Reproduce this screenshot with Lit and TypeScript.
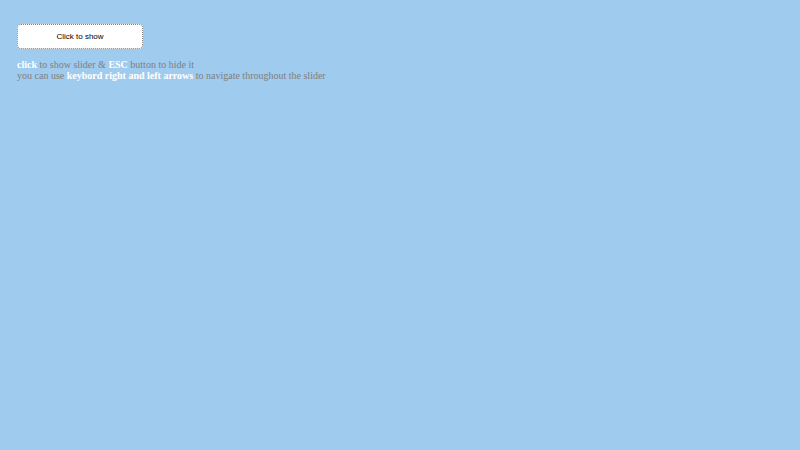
import { css, html, LitElement } from "lit";
import { customElement } from "lit/decorators.js";

@customElement("app-root")
export class AppRoot extends LitElement {
  static styles = css`
    :host {
      display: block;
      box-sizing: border-box;
      min-height: 100vh;
      padding: 24px 17px;
      background: #9fcbee;
      font-family: "Liberation Serif", "Times New Roman", serif;
    }
    .show {
      display: block;
      box-sizing: border-box;
      width: 126px;
      padding: 4px 6px;
      border: 1px dotted #808080;
      border-radius: 4px;
      background: #fff;
      color: #000;
      font: 8px/15px "Liberation Sans", Arial, sans-serif;
      cursor: pointer;
    }
    .hint {
      margin: 10px 0 0;
      color: #808080;
      font-size: 10px;
      line-height: 11px;
    }
    .key {
      color: #fff;
    }
  `;

  render() {
    return html`
      <button class="show" type="button">Click to show</button>
      <p class="hint">
        <b class="key">click</b> to show slider &amp; <b class="key">ESC</b> button to hide it<br />
        you can use <b class="key">keybord right and left arrows</b> to navigate throughout the slider
      </p>
    `;
  }
}
